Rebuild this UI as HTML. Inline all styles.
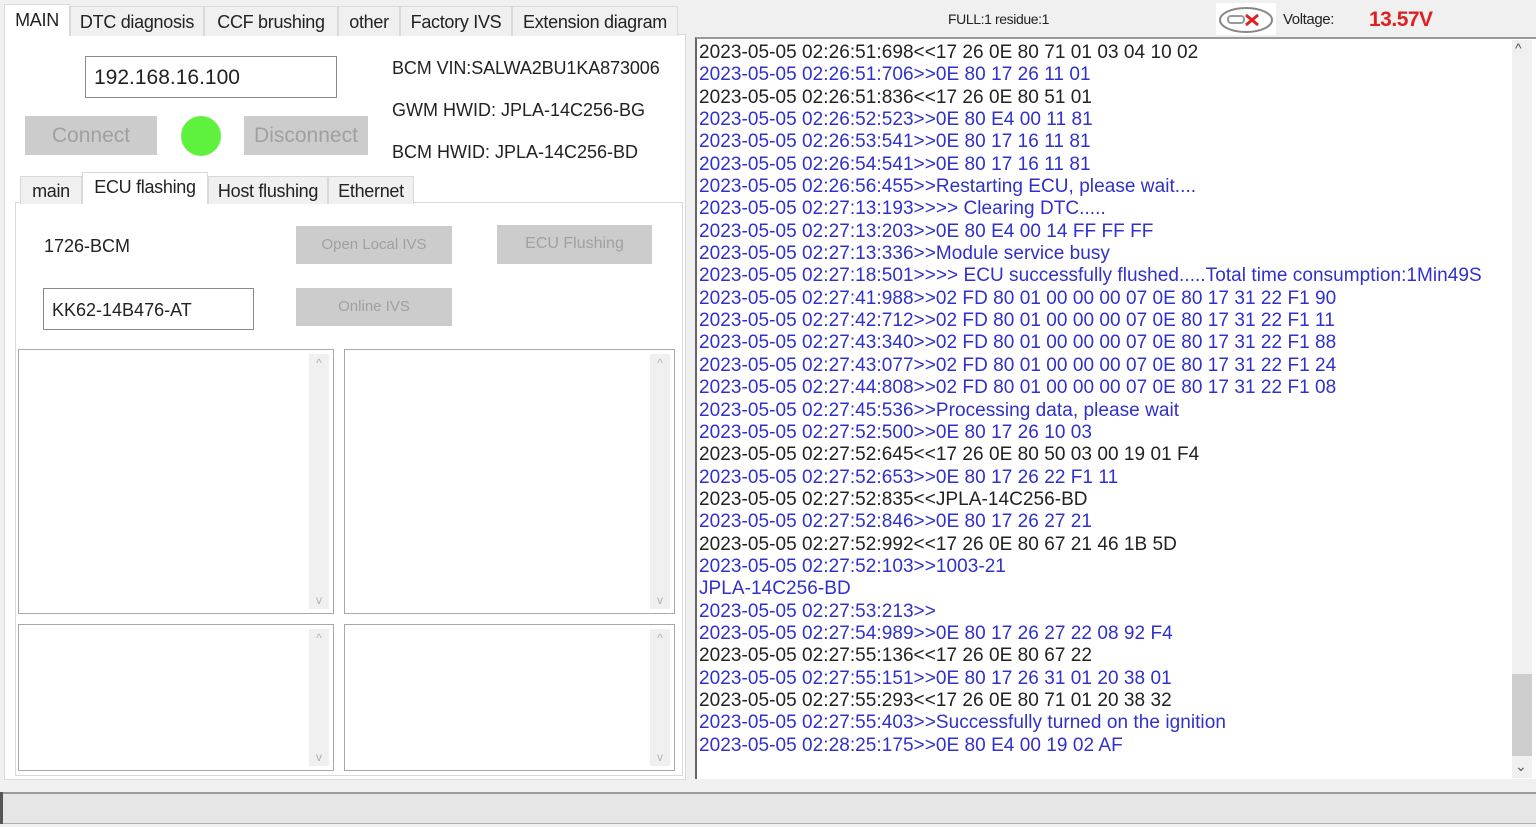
<!DOCTYPE html>
<html><head><meta charset="utf-8"><style>
*{box-sizing:border-box;margin:0;padding:0}
body{width:1536px;height:827px;background:#f0f0f0;font-family:"Liberation Sans",Arial,sans-serif;position:relative;overflow:hidden;color:#222}
.a{position:absolute}
.tab{position:absolute;top:6px;height:30px;background:#f0f0f0;border:1px solid #d9d9d9;border-bottom:none;font-size:18px;padding-top:5px;text-align:center;letter-spacing:-0.3px}
.btn{position:absolute;background:#cccccc;color:#a0a0a0;text-align:center}
.box{position:absolute;background:#fff;border:1px solid #a8a8a8}
.sb{position:absolute;top:4px;bottom:4px;right:4px;width:20px;background:#f0f0f0;color:#b0b0b0;font-size:12px;text-align:center}
.log{position:absolute;left:699px;top:42px;font-size:19px;line-height:22.35px;letter-spacing:0.05px;white-space:pre}
.b{color:#3030cc}
</style></head><body>
<div class="a" style="left:4px;top:34px;width:682px;height:746px;background:#fff;border:1px solid #d9d9d9"></div>
<div class="tab" style="left:4px;top:4px;width:66px;height:32px;background:#fff;border-color:#d9d9d9">MAIN</div>
<div class="tab" style="left:70px;width:134px">DTC diagnosis</div>
<div class="tab" style="left:204px;width:134px">CCF brushing</div>
<div class="tab" style="left:338px;width:62px">other</div>
<div class="tab" style="left:400px;width:112px">Factory IVS</div>
<div class="tab" style="left:512px;width:166px">Extension diagram</div>

<div class="box" style="left:85px;top:56px;width:252px;height:42px;border-color:#8a8a8a;font-size:21px;padding:9px 0 0 8px">192.168.16.100</div>
<div class="btn" style="left:25px;top:116px;width:132px;height:39px;font-size:21px;padding-top:8px">Connect</div>
<div class="a" style="left:181px;top:116px;width:40px;height:40px;border-radius:50%;background:#5ef23e"></div>
<div class="btn" style="left:244px;top:116px;width:124px;height:39px;font-size:21px;padding-top:8px">Disconnect</div>
<div class="a" style="left:392px;top:58px;font-size:18px;letter-spacing:-0.1px">BCM VIN:SALWA2BU1KA873006</div>
<div class="a" style="left:392px;top:100px;font-size:18px">GWM HWID: JPLA-14C256-BG</div>
<div class="a" style="left:392px;top:142px;font-size:18px">BCM HWID: JPLA-14C256-BD</div>

<div class="a" style="left:15px;top:202px;width:668px;height:574px;background:#fff;border:1px solid #d9d9d9"></div>
<div class="tab" style="left:20px;top:176px;width:62px;height:28px;font-size:18px;padding-top:4px">main</div>
<div class="tab" style="left:82px;top:172px;width:126px;height:32px;background:#fff;font-size:18px;padding-top:4px">ECU flashing</div>
<div class="tab" style="left:208px;top:176px;width:120px;height:28px;font-size:18px;padding-top:4px">Host flushing</div>
<div class="tab" style="left:328px;top:176px;width:86px;height:28px;font-size:18px;padding-top:4px">Ethernet</div>

<div class="a" style="left:44px;top:236px;font-size:18px">1726-BCM</div>
<div class="btn" style="left:296px;top:226px;width:156px;height:38px;font-size:15px;padding-top:10px">Open Local IVS</div>
<div class="btn" style="left:497px;top:225px;width:155px;height:39px;font-size:16px;padding-top:10px">ECU Flushing</div>
<div class="box" style="left:43px;top:288px;width:211px;height:42px;border-color:#8a8a8a;font-size:18px;padding:11px 0 0 8px">KK62-14B476-AT</div>
<div class="btn" style="left:296px;top:288px;width:156px;height:38px;font-size:15px;padding-top:10px">Online IVS</div>

<div class="box" style="left:18px;top:349px;width:316px;height:265px"><div class="sb"><div style="position:absolute;top:2px;width:100%">^</div><div style="position:absolute;bottom:2px;width:100%">v</div></div></div>
<div class="box" style="left:344px;top:349px;width:331px;height:265px"><div class="sb"><div style="position:absolute;top:2px;width:100%">^</div><div style="position:absolute;bottom:2px;width:100%">v</div></div></div>
<div class="box" style="left:18px;top:624px;width:316px;height:147px"><div class="sb"><div style="position:absolute;top:2px;width:100%">^</div><div style="position:absolute;bottom:2px;width:100%">v</div></div></div>
<div class="box" style="left:344px;top:624px;width:331px;height:147px"><div class="sb"><div style="position:absolute;top:2px;width:100%">^</div><div style="position:absolute;bottom:2px;width:100%">v</div></div></div>

<div class="a" style="left:948px;top:11px;font-size:14px;letter-spacing:-0.4px">FULL:1 residue:1</div>
<div class="a" style="left:1216px;top:3px;width:60px;height:32px;background:#fff">
<svg width="60" height="32"><ellipse cx="30" cy="17" rx="26" ry="12" fill="none" stroke="#888" stroke-width="2"/><rect x="12" y="13" width="16" height="7" rx="3" fill="none" stroke="#999" stroke-width="2"/><path d="M30 12 L42 22 M42 12 L30 22" stroke="#d22" stroke-width="3"/></svg></div>
<div class="a" style="left:1283px;top:11px;font-size:15px;letter-spacing:-0.4px">Voltage:</div>
<div class="a" style="left:1369px;top:8px;font-size:21px;font-weight:bold;color:#e02020;letter-spacing:-0.5px">13.57V</div>

<div class="a" style="left:695px;top:37px;width:841px;height:742px;background:#fff;border-left:2px solid #666;border-top:2px solid #999"></div>
<div class="a" style="left:1512px;top:40px;width:20px;height:738px;background:#f0f0f0"></div>
<div class="a" style="left:1512px;top:674px;width:20px;height:82px;background:#cdcdcd"></div>
<div class="a" style="left:1515px;top:40px;font-size:14px;color:#555">^</div>
<div class="a" style="left:1515px;top:758px;font-size:14px;color:#555">&#8964;</div>
<div class="log">2023-05-05 02:26:51:698&lt;&lt;17 26 0E 80 71 01 03 04 10 02
<span class="b">2023-05-05 02:26:51:706&gt;&gt;0E 80 17 26 11 01</span>
2023-05-05 02:26:51:836&lt;&lt;17 26 0E 80 51 01
<span class="b">2023-05-05 02:26:52:523&gt;&gt;0E 80 E4 00 11 81
2023-05-05 02:26:53:541&gt;&gt;0E 80 17 16 11 81
2023-05-05 02:26:54:541&gt;&gt;0E 80 17 16 11 81
2023-05-05 02:26:56:455&gt;&gt;Restarting ECU, please wait....
2023-05-05 02:27:13:193&gt;&gt;&gt;&gt; Clearing DTC.....
2023-05-05 02:27:13:203&gt;&gt;0E 80 E4 00 14 FF FF FF
2023-05-05 02:27:13:336&gt;&gt;Module service busy
2023-05-05 02:27:18:501&gt;&gt;&gt;&gt; ECU successfully flushed.....Total time consumption:1Min49S
2023-05-05 02:27:41:988&gt;&gt;02 FD 80 01 00 00 00 07 0E 80 17 31 22 F1 90
2023-05-05 02:27:42:712&gt;&gt;02 FD 80 01 00 00 00 07 0E 80 17 31 22 F1 11
2023-05-05 02:27:43:340&gt;&gt;02 FD 80 01 00 00 00 07 0E 80 17 31 22 F1 88
2023-05-05 02:27:43:077&gt;&gt;02 FD 80 01 00 00 00 07 0E 80 17 31 22 F1 24
2023-05-05 02:27:44:808&gt;&gt;02 FD 80 01 00 00 00 07 0E 80 17 31 22 F1 08
2023-05-05 02:27:45:536&gt;&gt;Processing data, please wait
2023-05-05 02:27:52:500&gt;&gt;0E 80 17 26 10 03</span>
2023-05-05 02:27:52:645&lt;&lt;17 26 0E 80 50 03 00 19 01 F4
<span class="b">2023-05-05 02:27:52:653&gt;&gt;0E 80 17 26 22 F1 11</span>
2023-05-05 02:27:52:835&lt;&lt;JPLA-14C256-BD
<span class="b">2023-05-05 02:27:52:846&gt;&gt;0E 80 17 26 27 21</span>
2023-05-05 02:27:52:992&lt;&lt;17 26 0E 80 67 21 46 1B 5D
<span class="b">2023-05-05 02:27:52:103&gt;&gt;1003-21
JPLA-14C256-BD
2023-05-05 02:27:53:213&gt;&gt;
2023-05-05 02:27:54:989&gt;&gt;0E 80 17 26 27 22 08 92 F4</span>
2023-05-05 02:27:55:136&lt;&lt;17 26 0E 80 67 22
<span class="b">2023-05-05 02:27:55:151&gt;&gt;0E 80 17 26 31 01 20 38 01</span>
2023-05-05 02:27:55:293&lt;&lt;17 26 0E 80 71 01 20 38 32
<span class="b">2023-05-05 02:27:55:403&gt;&gt;Successfully turned on the ignition
2023-05-05 02:28:25:175&gt;&gt;0E 80 E4 00 19 02 AF</span></div>

<div class="a" style="left:0;top:792px;width:1536px;height:32px;background:#e6e6e6;border-top:2px solid #9a9a9a;border-bottom:1px solid #b0b0b0"></div>
<div class="a" style="left:0;top:792px;width:3px;height:32px;background:#555"></div>
</body></html>
